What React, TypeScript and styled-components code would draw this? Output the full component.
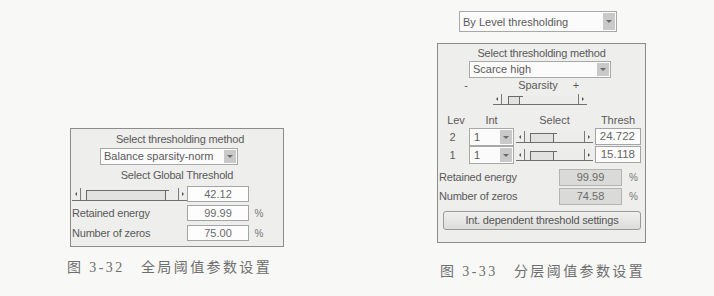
import React from 'react';
import styled, { createGlobalStyle } from 'styled-components';

const GlobalStyle = createGlobalStyle`
  html, body {
    margin: 0;
    padding: 0;
    background: #f8f8f7;
  }
  body {
    font-family: 'Liberation Sans', Arial, sans-serif;
    color: #5a5a5a;
  }
`;

const Page = styled.div`
  width: 714px;
  height: 296px;
  display: flex;
  align-items: flex-start;
  padding: 11px 0 0 67px;
  box-sizing: border-box;
  overflow: hidden;
`;

const Figure = styled.div<{ $gap: number; $top: number }>`
  display: flex;
  flex-direction: column;
  align-items: flex-start;
  margin-top: ${({ $top }) => $top}px;
  margin-right: ${({ $gap }) => $gap}px;
`;

const Caption = styled.div<{ $top: number; $left: number }>`
  margin-top: ${({ $top }) => $top}px;
  margin-left: ${({ $left }) => $left}px;
  font-family: 'Liberation Serif', 'Noto Sans CJK SC', serif;
  font-size: 14px;
  line-height: 18px;
  letter-spacing: 2.4px;
  color: #6e6e6e;
  white-space: pre;
`;

const Panel = styled.div<{ $width: number; $height: number; $left: number; $top: number }>`
  width: ${({ $width }) => $width}px;
  height: ${({ $height }) => $height}px;
  margin-left: ${({ $left }) => $left}px;
  margin-top: ${({ $top }) => $top}px;
  box-sizing: border-box;
  border: 1px solid #8c8c8c;
  background: #eeeeec;
  display: flex;
  flex-direction: column;
  font-size: 11px;
  line-height: 13px;
`;

const Title = styled.div<{ $h: number; $shift?: number; $mt?: number }>`
  height: ${({ $h }) => $h}px;
  margin-top: ${({ $mt }) => $mt || 0}px;
  display: flex;
  align-items: center;
  justify-content: center;
  padding-left: ${({ $shift }) => $shift || 0}px;
  letter-spacing: -0.2px;
`;

const Select = styled.div<{ $w: number; $h: number; $left: number }>`
  width: ${({ $w }) => $w}px;
  height: ${({ $h }) => $h}px;
  margin-left: ${({ $left }) => $left}px;
  box-sizing: border-box;
  border: 1px solid #a8a8a8;
  background: #fbfbfb;
  display: flex;
  align-items: center;
  font-size: 11px;
  padding-left: 3px;
  flex-shrink: 0;
`;

const SelectText = styled.span`
  flex: 1;
  white-space: nowrap;
  overflow: hidden;
`;

const SelectArrow = styled.span`
  width: 12px;
  align-self: stretch;
  margin: 1px;
  background: #c9c9c9;
  display: flex;
  align-items: center;
  justify-content: center;
  &::after {
    content: '';
    border-left: 3px solid transparent;
    border-right: 3px solid transparent;
    border-top: 3px solid #6a6a6a;
  }
`;

const DropDown = ({ text, w, h, left }: { text: string; w: number; h: number; left: number }) => (
  <Select $w={w} $h={h} $left={left}>
    <SelectText>{text}</SelectText>
    <SelectArrow />
  </Select>
);

const SliderBox = styled.div<{ $w: number; $h: number; $left: number; $mt: number }>`
  width: ${({ $w }) => $w}px;
  height: ${({ $h }) => $h}px;
  margin-left: ${({ $left }) => $left}px;
  margin-top: ${({ $mt }) => $mt}px;
  display: flex;
  align-items: stretch;
  box-sizing: border-box;
  border-bottom: 1px solid #707070;
  flex-shrink: 0;
`;

const ArrowBtn = styled.div<{ $dir: 'left' | 'right' }>`
  width: 8px;
  display: flex;
  align-items: center;
  justify-content: center;
  border-${({ $dir }) => ($dir === 'left' ? 'right' : 'left')}: 1px solid #7a7a7a;
  &::after {
    content: '';
    border-top: 2px solid transparent;
    border-bottom: 2px solid transparent;
    ${({ $dir }) => ($dir === 'left' ? 'border-right' : 'border-left')}: 2px solid #555;
  }
`;

const Track = styled.div`
  flex: 1;
  position: relative;
  margin-top: 2px;
  background: #ececea;
`;

const Thumb = styled.div`
  position: absolute;
  top: 0;
  bottom: 0;
  border-left: 1px solid #6a6a6a;
  border-top: 1px solid #6a6a6a;
  background: #e2e2e0;
`;

const Mark = styled.div`
  position: absolute;
  top: 0;
  bottom: 0;
  border-left: 1px solid #6a6a6a;
  border-top: 1px solid #6a6a6a;
  width: 3px;
`;

const Slider = ({
  w,
  h,
  left,
  mt = 0,
  from,
  to,
  marks = [],
}: {
  w: number;
  h: number;
  left: number;
  mt?: number;
  from: number;
  to: number;
  marks?: number[];
}) => (
  <SliderBox $w={w} $h={h} $left={left} $mt={mt}>
    <ArrowBtn $dir="left" />
    <Track>
      <Thumb style={{ left: `${from}%`, width: `${to - from}%` }} />
      {marks.map((m) => (
        <Mark key={m} style={{ left: `${m}%` }} />
      ))}
    </Track>
    <ArrowBtn $dir="right" />
  </SliderBox>
);

const ValueRow = styled.div<{ $h: number; $cols: string; $mt: number }>`
  height: ${({ $h }) => $h}px;
  margin-top: ${({ $mt }) => $mt}px;
  display: grid;
  grid-template-columns: ${({ $cols }) => $cols};
  align-items: center;
  flex-shrink: 0;
`;

const Label = styled.div`
  padding-left: 1px;
  white-space: nowrap;
  letter-spacing: -0.2px;
`;

const Edit = styled.div<{ $dim?: boolean }>`
  height: 100%;
  box-sizing: border-box;
  border: 1px solid ${({ $dim }) => ($dim ? '#b4b4b4' : '#a4a4a4')};
  background: ${({ $dim }) => ($dim ? '#dadad8' : '#fdfdfd')};
  display: flex;
  align-items: center;
  justify-content: center;
  color: #6a6a6a;
`;

const Pct = styled.div`
  text-align: center;
  color: #777;
  font-size: 10px;
`;

const SignRow = styled.div`
  height: 14px;
  display: grid;
  grid-template-columns: 56px 12px 64px 12px;
  align-items: center;
  justify-items: center;
  flex-shrink: 0;
`;

const LevGrid = styled.div`
  display: grid;
  grid-template-columns: 29px 45px 77px 46px;
  column-gap: 2px;
  margin-top: 7px;
`;

const HeadCell = styled.div<{ $shift?: number }>`
  height: 16px;
  display: flex;
  align-items: center;
  justify-content: center;
  padding-left: ${({ $shift }) => $shift || 0}px;
`;

const LevCell = styled.div`
  height: 18px;
  display: flex;
  align-items: center;
  justify-content: center;
`;

const IntSelect = styled.div`
  height: 18px;
  box-sizing: border-box;
  border: 1px solid #a8a8a8;
  background: #fbfbfb;
  display: flex;
  align-items: center;
  padding-left: 4px;
`;

const SliderCell = styled.div`
  height: 18px;
  display: flex;
  align-items: center;
`;

const ThreshEdit = styled.div`
  height: 17px;
  box-sizing: border-box;
  border: 1px solid #a4a4a4;
  background: #fdfdfd;
  display: flex;
  align-items: center;
  justify-content: flex-end;
  padding-right: 5px;
  font-size: 11.5px;
  color: #666;
`;

const WideButton = styled.div`
  margin: 6px 0 0 5px;
  width: 198px;
  height: 19px;
  box-sizing: border-box;
  border: 1px solid #9a9a9a;
  border-radius: 3px;
  background: linear-gradient(#f0f0ee, #dcdcda);
  display: flex;
  align-items: center;
  justify-content: center;
  letter-spacing: -0.2px;
  color: #555;
  flex-shrink: 0;
`;

export default function App() {
  return (
    <>
      <GlobalStyle />
      <Page>
        <Figure $gap={153} $top={117}>
          <Panel $width={214} $height={119} $left={3} $top={0}>
            <Title $h={17} $mt={2} $shift={6}>Select thresholding method</Title>
            <DropDown text="Balance sparsity-norm" w={138} h={17} left={29} />
            <Title $h={21} $shift={-14}>Select Global Threshold</Title>
            <ValueRow $h={16} $cols="116px 62px 1fr" $mt={0}>
              <Slider w={115} h={13} left={1} from={5} to={87} marks={[87]} />
              <Edit>42.12</Edit>
              <span />
            </ValueRow>
            <ValueRow $h={16} $cols="116px 62px 20px" $mt={3}>
              <Label>Retained energy</Label>
              <Edit>99.99</Edit>
              <Pct>%</Pct>
            </ValueRow>
            <ValueRow $h={16} $cols="116px 62px 20px" $mt={4}>
              <Label>Number of zeros</Label>
              <Edit>75.00</Edit>
              <Pct>%</Pct>
            </ValueRow>
          </Panel>
          <Caption $top={12} $left={0}>{'图 3-32　全局阈值参数设置'}</Caption>
        </Figure>

        <Figure $gap={0} $top={0}>
          <DropDown text="By Level thresholding" w={158} h={21} left={22} />
          <Panel $width={209} $height={200} $left={0} $top={11}>
            <Title $h={16} $mt={1}>Select thresholding method</Title>
            <DropDown text="Scarce high" w={142} h={17} left={31} />
            <SignRow>
              <span>-</span>
              <span />
              <span>Sparsity</span>
              <span>+</span>
            </SignRow>
            <Slider w={94} h={11} left={55} mt={2} from={8} to={22} marks={[22]} />
            <LevGrid>
              <HeadCell $shift={7}>Lev</HeadCell>
              <HeadCell>Int</HeadCell>
              <HeadCell>Select</HeadCell>
              <HeadCell>Thresh</HeadCell>
              <LevCell>2</LevCell>
              <IntSelect>
                <SelectText>1</SelectText>
                <SelectArrow />
              </IntSelect>
              <SliderCell>
                <Slider w={77} h={12} left={0} from={8} to={48} marks={[48]} />
              </SliderCell>
              <ThreshEdit>24.722</ThreshEdit>
              <LevCell>1</LevCell>
              <IntSelect>
                <SelectText>1</SelectText>
                <SelectArrow />
              </IntSelect>
              <SliderCell>
                <Slider w={77} h={12} left={0} from={8} to={48} marks={[48]} />
              </SliderCell>
              <ThreshEdit>15.118</ThreshEdit>
            </LevGrid>
            <ValueRow $h={17} $cols="121px 63px 1fr" $mt={5}>
              <Label>Retained energy</Label>
              <Edit $dim>99.99</Edit>
              <Pct>%</Pct>
            </ValueRow>
            <ValueRow $h={17} $cols="121px 63px 1fr" $mt={2}>
              <Label>Number of zeros</Label>
              <Edit $dim>74.58</Edit>
              <Pct>%</Pct>
            </ValueRow>
            <WideButton>Int. dependent threshold settings</WideButton>
          </Panel>
          <Caption $top={20} $left={3}>{'图 3-33　分层阈值参数设置'}</Caption>
        </Figure>
      </Page>
    </>
  );
}
